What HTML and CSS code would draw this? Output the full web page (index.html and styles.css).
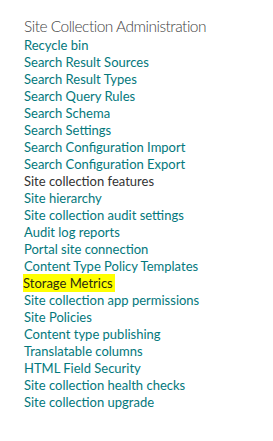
FILE: index.html
```html
<!DOCTYPE html>
<html lang="en">
<head>
    <meta charset="UTF-8">
    <meta name="viewport" content="width=device-width, initial-scale=1.0">
    <title>Site Collection Administration</title>
    <link rel="stylesheet" href="styles.css">
</head>
<body>
    <div class="section">
        <h3 class="section-title">Site Collection Administration</h3>
        <ul class="links">
            <li><a href="#">Recycle bin</a></li>
            <li><a href="#">Search Result Sources</a></li>
            <li><a href="#">Search Result Types</a></li>
            <li><a href="#">Search Query Rules</a></li>
            <li><a href="#">Search Schema</a></li>
            <li><a href="#">Search Settings</a></li>
            <li><a href="#">Search Configuration Import</a></li>
            <li><a href="#">Search Configuration Export</a></li>
            <li><a href="#" class="visited">Site collection features</a></li>
            <li><a href="#">Site hierarchy</a></li>
            <li><a href="#">Site collection audit settings</a></li>
            <li><a href="#">Audit log reports</a></li>
            <li><a href="#">Portal site connection</a></li>
            <li><a href="#">Content Type Policy Templates</a></li>
            <li><a href="#" class="marked">Storage Metrics</a></li>
            <li><a href="#">Site collection app permissions</a></li>
            <li><a href="#">Site Policies</a></li>
            <li><a href="#">Content type publishing</a></li>
            <li><a href="#">Translatable columns</a></li>
            <li><a href="#">HTML Field Security</a></li>
            <li><a href="#">Site collection health checks</a></li>
            <li><a href="#">Site collection upgrade</a></li>
        </ul>
    </div>
</body>
</html>
```

FILE: styles.css
```css
body {
    margin: 0;
    background: #fff;
    font-family: 'Lato', 'Open Sans', sans-serif;
}

.section {
    padding: 16px 0 0 24px;
}

.section-title {
    margin: 0 0 1px;
    font-size: 15.5px;
    font-weight: 300;
    letter-spacing: -0.5px;
    line-height: 20px;
    color: #444;
}

.links {
    list-style: none;
    margin: 0;
    padding: 0;
}

.links li {
    font-size: 13px;
    line-height: 17px;
}

.links a {
    color: #03787c;
    text-decoration: none;
}

.links a.visited {
    color: #333;
}

.links a.marked {
    color: #2b2b10;
    background: #ffff00;
    padding: 1px 2px 1px 0;
    margin-left: -1px;
}
```
